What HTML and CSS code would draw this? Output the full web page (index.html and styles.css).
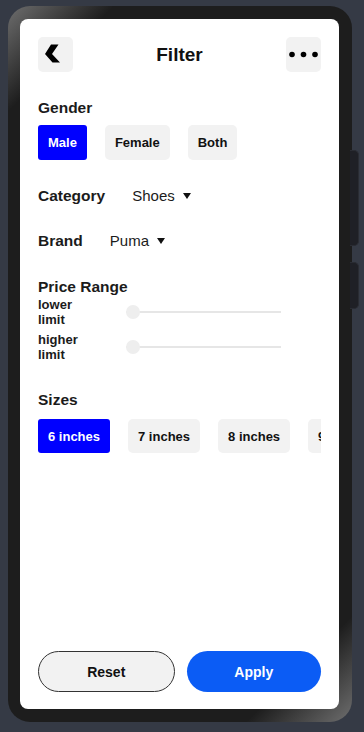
FILE: index.html
```html
<!doctype html>
<html lang="en">

<head>
    <meta charset="utf-8">
    <meta name="viewport" content="width=device-width, initial-scale=1">
    <title>Filter</title>

    <link rel="stylesheet" href="styles.css">

</head>

<body>
    <div class="phone">
        <div class="screen">
            <div class="header">
                <button class="icon-btn" aria-label="Back">
                    <svg width="35" height="35" viewBox="0 0 35 35">
                        <polygon points="13,7.5 20.5,7.5 14,17 22,25.5 14.5,25.5 7,17" fill="#000" />
                    </svg>
                </button>
                <h1>Filter</h1>
                <button class="icon-btn" aria-label="More">
                    <svg width="35" height="35" viewBox="0 0 35 35">
                        <circle cx="6" cy="17.5" r="2.8" fill="#000" />
                        <circle cx="17.5" cy="17.5" r="2.8" fill="#000" />
                        <circle cx="29" cy="17.5" r="2.8" fill="#000" />
                    </svg>
                </button>
            </div>

            <div class="label gender-label">Gender</div>
            <div class="chips gender">
                <button class="chip active">Male</button>
                <button class="chip">Female</button>
                <button class="chip">Both</button>
            </div>

            <div class="pick-row category">
                <span class="label">Category</span>
                <span class="pick">Shoes <span class="caret"></span></span>
            </div>

            <div class="pick-row brand">
                <span class="label">Brand</span>
                <span class="pick">Puma <span class="caret"></span></span>
            </div>

            <div class="label price-label">Price Range</div>
            <div class="limit-row lower">
                <span class="limit">lower limit</span>
                <input class="slider" type="range" min="0" max="100" value="0">
            </div>
            <div class="limit-row higher">
                <span class="limit">higher limit</span>
                <input class="slider" type="range" min="0" max="100" value="0">
            </div>

            <div class="label sizes-label">Sizes</div>
            <div class="chips sizes">
                <button class="chip active">6 inches</button>
                <button class="chip">7 inches</button>
                <button class="chip">8 inches</button>
                <button class="chip">9 inches</button>
            </div>

            <div class="footer">
                <button class="reset">Reset</button>
                <button class="apply">Apply</button>
            </div>
        </div>
    </div>
</body>

</html>
```

FILE: styles.css
```css
body {
    margin: 0;
    background-color: #353a45;
    font-family: "Liberation Sans", Arial, Helvetica, sans-serif;
    color: #1b1b1b;
}

button {
    font-family: inherit;
    border: none;
    cursor: pointer;
}

.phone {
    position: relative;
    box-sizing: border-box;
    width: 344px;
    height: 716px;
    margin: 6px 0 0 8px;
    padding: 13px 13px 13px 12px;
    border-radius: 22px;
    background: linear-gradient(135deg, #6e6e6e 0%, #1d1d1d 10%, #1d1d1d 90%, #6e6e6e 100%);
}

/* side keys */
.phone::before,
.phone::after {
    content: "";
    position: absolute;
    left: 342px;
    width: 8px;
    border-radius: 0 5px 5px 0;
    background-color: #1f2026;
    border: 1px solid #2a2c33;
    border-left: none;
}

.phone::before {
    top: 144px;
    height: 94px;
}

.phone::after {
    top: 256px;
    height: 45px;
}

.screen {
    box-sizing: border-box;
    height: 100%;
    background-color: #fff;
    border-radius: 8px;
    padding: 18px 18px 17px 18px;
    display: flex;
    flex-direction: column;
}

.header {
    display: flex;
    justify-content: space-between;
    align-items: center;
    height: 35px;
}

.header h1 {
    margin: 0;
    font-size: 19px;
    font-weight: bold;
    color: #111;
}

.icon-btn {
    width: 35px;
    height: 35px;
    padding: 0;
    border-radius: 5px;
    background-color: #f2f2f2;
    display: flex;
}

.label {
    font-size: 15.5px;
    font-weight: bold;
    line-height: 18px;
}

.gender-label {
    margin-top: 27px;
}

.chips {
    display: flex;
    gap: 18px;
}

.gender {
    margin-top: 8px;
}

.chip {
    flex: none;
    height: 35px;
    padding: 0 10px;
    border-radius: 5px;
    background-color: #f2f2f2;
    color: #111;
    font-size: 13px;
    font-weight: bold;
}

.chip.active {
    background-color: #0000ff;
    color: #fff;
    border-radius: 3px;
}

.pick-row {
    display: flex;
    align-items: center;
    gap: 27px;
    margin-top: 27px;
}

.pick {
    font-size: 15px;
    line-height: 18px;
    display: flex;
    align-items: center;
}

.caret {
    margin-left: 8px;
    width: 0;
    height: 0;
    border-left: 4.5px solid transparent;
    border-right: 4.5px solid transparent;
    border-top: 6px solid #111;
}

.price-label {
    margin-top: 28px;
}

.limit-row {
    display: flex;
    align-items: center;
}

.lower {
    margin-top: 1px;
}

.higher {
    margin-top: 5px;
}

.limit {
    width: 45px;
    font-size: 13px;
    font-weight: bold;
    line-height: 15px;
}

.slider {
    -webkit-appearance: none;
    appearance: none;
    width: 155px;
    height: 14px;
    margin: 0 0 0 43px;
    background: transparent;
}

.slider::-webkit-slider-runnable-track {
    height: 2px;
    background-color: #e6e6e6;
}

.slider::-webkit-slider-thumb {
    -webkit-appearance: none;
    width: 14px;
    height: 14px;
    margin-top: -6px;
    border-radius: 50%;
    background-color: #eeeeee;
}

.sizes-label {
    margin-top: 29px;
}

.sizes {
    margin-top: 10px;
    overflow: hidden;
}

.sizes .chip {
    height: 34px;
}

.footer {
    margin-top: auto;
    display: flex;
    gap: 12px;
}

.footer button {
    flex: 1;
    height: 41px;
    border-radius: 21px;
    font-size: 14px;
    font-weight: bold;
}

.reset {
    background-color: #f2f2f2;
    color: #111;
    border: 1px solid #333 !important;
}

.apply {
    background-color: #0b5cf5;
    color: #fff;
}
```
